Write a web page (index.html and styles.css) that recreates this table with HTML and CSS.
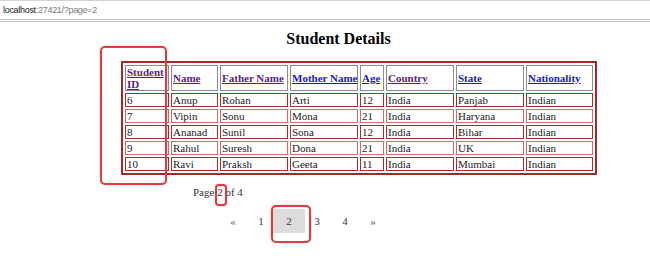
FILE: index.html
```html
<!DOCTYPE html>
<html>
<head>
<meta charset="utf-8">
<link rel="stylesheet" href="styles.css">
</head>
<body>
<div class="addr"><span class="host">localhost</span><span class="path">:27421/?page=2</span></div>
<main class="page">
  <h1 class="title">Student Details</h1>
  <table class="grid">
    <thead>
      <tr>
        <th class="c-id"><a class="visited" href="#">Student ID</a></th>
        <th class="c-name"><a class="visited" href="#">Name</a></th>
        <th class="c-wide"><a class="visited" href="#">Father Name</a></th>
        <th class="c-wide"><a class="fresh" href="#">Mother Name</a></th>
        <th class="c-age"><a class="fresh" href="#">Age</a></th>
        <th class="c-wide"><a class="visited" href="#">Country</a></th>
        <th class="c-wide"><a class="fresh" href="#">State</a></th>
        <th class="c-nat"><a class="fresh" href="#">Nationality</a></th>
      </tr>
    </thead>
    <tbody>
      <tr class="dark"><td>6</td><td>Anup</td><td>Rohan</td><td>Arti</td><td>12</td><td>India</td><td>Panjab</td><td>Indian</td></tr>
      <tr class="light"><td>7</td><td>Vipin</td><td>Sonu</td><td>Mona</td><td>21</td><td>India</td><td>Haryana</td><td>Indian</td></tr>
      <tr class="dark"><td>8</td><td>Ananad</td><td>Sunil</td><td>Sona</td><td>12</td><td>India</td><td>Bihar</td><td>Indian</td></tr>
      <tr class="light"><td>9</td><td>Rahul</td><td>Suresh</td><td>Dona</td><td>21</td><td>India</td><td>UK</td><td>Indian</td></tr>
      <tr class="dark"><td>10</td><td>Ravi</td><td>Praksh</td><td>Geeta</td><td>11</td><td>India</td><td>Mumbai</td><td>Indian</td></tr>
    </tbody>
  </table>
  <div class="pageinfo">Page 2 of 4</div>
  <ul class="pager">
    <li class="pg arrow">«</li>
    <li class="pg">1</li>
    <li class="pg active">2</li>
    <li class="pg">3</li>
    <li class="pg">4</li>
    <li class="pg arrow">»</li>
  </ul>
</main>
<div class="mark mark-col"></div>
<div class="mark mark-num"></div>
<div class="mark mark-page"></div>
</body>
</html>
```

FILE: styles.css
```css
html, body {
  margin: 0;
  padding: 0;
  background: #ffffff;
}

body {
  width: 650px;
  height: 268px;
  overflow: hidden;
  position: relative;
  font-family: "Liberation Serif", "Times New Roman", serif;
  color: #222;
}

.addr {
  box-sizing: border-box;
  height: 22px;
  border-top: 1px solid #d4d4d4;
  border-bottom: 3px double #c6c6c6;
  padding-left: 3px;
  font-family: "Liberation Sans", Arial, sans-serif;
  font-size: 9px;
  letter-spacing: -0.3px;
  line-height: 18px;
}

.host {
  color: #222;
}

.path {
  color: #7a7a7a;
}

.page {
  display: flex;
  flex-direction: column;
  align-items: flex-start;
}

.title {
  align-self: stretch;
  margin: 8px 0 0;
  padding-left: 27px;
  text-align: center;
  font-size: 16px;
  line-height: 18px;
  font-weight: bold;
  color: #000;
}

.grid {
  margin: 13px 0 0 121px;
  width: 476px;
  table-layout: fixed;
  border: 2px solid #a52828;
  border-spacing: 2px;
  font-size: 11px;
  line-height: 12px;
}

.grid th,
.grid td {
  box-sizing: border-box;
  padding: 0 1px;
  text-align: left;
}

.grid th {
  border: 1px solid #8c8c8c;
  font-weight: bold;
  vertical-align: middle;
  white-space: nowrap;
  overflow: visible;
}

.grid th.c-id {
  white-space: normal;
}

.c-id { width: 44px; }
.c-name { width: 47px; }
.c-wide { width: 68px; }
.c-age { width: 24px; }
.c-nat { width: 67px; }

.grid a {
  text-decoration: underline;
}

.visited {
  color: #5a1f8c;
}

.fresh {
  color: #1a1ad6;
}

.grid td {
  height: 14px;
  border: 1px solid #b32a2a;
  color: #222;
}

.grid tr.light td {
  border-color: #d26a6a;
}

.pageinfo {
  margin: 11px 0 0 193px;
  font-size: 11px;
  line-height: 13px;
  color: #333;
}

.pager {
  display: flex;
  list-style: none;
  margin: 10px 0 0 219px;
  padding: 0;
  font-size: 11px;
}

.pg {
  width: 28px;
  height: 24px;
  line-height: 24px;
  text-align: center;
  color: #333;
}

.arrow {
  color: #666;
}

.pg.active {
  width: 32px;
  margin: 0 -2px;
  background: #dcdcdc;
}

.mark {
  position: absolute;
  box-sizing: border-box;
  border: 2px solid #e43a3f;
  border-radius: 5px;
  box-shadow: 0 0 2px rgba(0, 0, 0, 0.25);
}

.mark-col {
  left: 100px;
  top: 46px;
  width: 67px;
  height: 139px;
}

.mark-num {
  left: 215px;
  top: 184px;
  width: 12px;
  height: 22px;
  border-radius: 4px;
}

.mark-page {
  left: 271px;
  top: 205px;
  width: 40px;
  height: 38px;
}
```
